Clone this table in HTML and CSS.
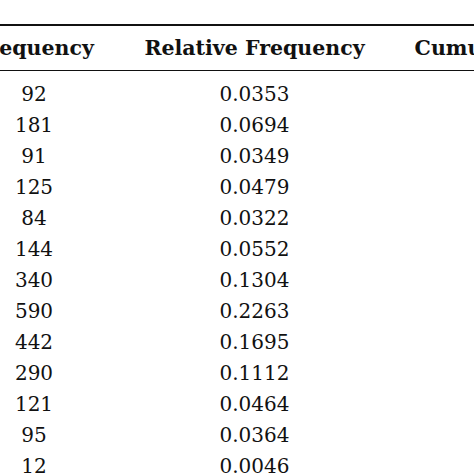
FILE: index.html
```html
<!DOCTYPE html>
<html lang="en">
<head>
<meta charset="utf-8">
<title>Frequency table</title>
<link rel="stylesheet" href="styles.css">
</head>
<body>
<div class="page">
<table class="freq">
<colgroup>
<col class="c1"><col class="c2"><col class="c3">
</colgroup>
<thead>
<tr><th>Frequency</th><th>Relative Frequency</th><th>Cumulative Frequency</th></tr>
</thead>
<tbody>
<tr class="first"><td>92</td><td>0.0353</td><td>0.0353</td></tr>
<tr><td>181</td><td>0.0694</td><td>0.1047</td></tr>
<tr><td>91</td><td>0.0349</td><td>0.1396</td></tr>
<tr><td>125</td><td>0.0479</td><td>0.1875</td></tr>
<tr><td>84</td><td>0.0322</td><td>0.2197</td></tr>
<tr><td>144</td><td>0.0552</td><td>0.2749</td></tr>
<tr><td>340</td><td>0.1304</td><td>0.4053</td></tr>
<tr><td>590</td><td>0.2263</td><td>0.6316</td></tr>
<tr><td>442</td><td>0.1695</td><td>0.8011</td></tr>
<tr><td>290</td><td>0.1112</td><td>0.9123</td></tr>
<tr><td>121</td><td>0.0464</td><td>0.9587</td></tr>
<tr><td>95</td><td>0.0364</td><td>0.9951</td></tr>
<tr><td>12</td><td>0.0046</td><td>0.9997</td></tr>
</tbody>
</table>
</div>
</body>
</html>
```

FILE: styles.css
```css
html, body {
  margin: 0;
  padding: 0;
  background: #ffffff;
  overflow: hidden;
  width: 474px;
  height: 474px;
}
.page {
  padding-top: 24px;
  width: 474px;
  height: 450px;
  overflow: hidden;
}
.freq {
  margin-left: -60px;
  border-collapse: collapse;
  table-layout: fixed;
  width: 766px;
  font-family: "DejaVu Serif", "Liberation Serif", serif;
  color: #111111;
}
.c1 { width: 188px; }
.c2 { width: 253px; }
.c3 { width: 325px; }
.freq thead th {
  border-top: 2px solid #111;
  border-bottom: 1px solid #111;
  height: 44px;
  padding: 0;
  font-size: 20.5px;
  font-weight: bold;
  text-align: center;
  vertical-align: middle;
  white-space: nowrap;
}
.freq tbody td {
  height: 31px;
  padding: 0;
  font-size: 20px;
  text-align: center;
  vertical-align: middle;
  white-space: nowrap;
}
.freq tbody tr.first td {
  padding-top: 7px;
}
```
